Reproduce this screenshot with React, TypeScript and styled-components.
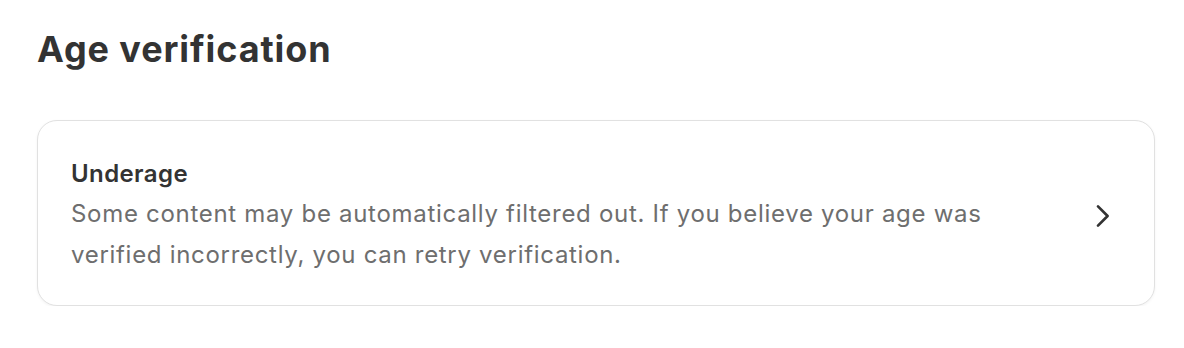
import React from "react";
import styled, { createGlobalStyle } from "styled-components";

const GlobalStyle = createGlobalStyle`
  body {
    margin: 0;
    background: #ffffff;
    font-family: Inter, "Noto Sans", sans-serif;
    color: #333333;
  }
`;

const Page = styled.div`
  padding: 24px 29px 0 37px;
`;

const Title = styled.h1`
  margin: 0 0 46px;
  font-size: 36px;
  line-height: 50px;
  font-weight: 700;
  color: #333333;
  letter-spacing: 0.9px;
`;

const Card = styled.button`
  display: flex;
  align-items: center;
  width: 100%;
  box-sizing: border-box;
  padding: 36px 36px 30px 33px;
  border: 1px solid #e1e1e1;
  border-radius: 20px;
  background: #ffffff;
  box-shadow: 0 1px 3px rgba(0, 0, 0, 0.05);
  text-align: left;
  font-family: inherit;
  cursor: pointer;
`;

const Body = styled.div`
  flex: 1;
`;

const Label = styled.div`
  font-size: 24px;
  line-height: 34px;
  font-weight: 600;
  color: #333333;
  letter-spacing: 0.4px;
`;

const Description = styled.p`
  margin: 2px 0 0;
  max-width: 960px;
  font-size: 24px;
  line-height: 41px;
  font-weight: 400;
  color: #6e6e6e;
  letter-spacing: 0.7px;
`;

const Chevron = () => (
  <svg width="32" height="32" viewBox="0 0 24 24" fill="none">
    <path
      d="M9 4.8l7.2 7.2L9 19.2"
      stroke="#333333"
      strokeWidth="2"
      strokeLinecap="round"
      strokeLinejoin="round"
    />
  </svg>
);

export default function App() {
  return (
    <>
      <GlobalStyle />
      <Page>
        <Title>Age verification</Title>
        <Card>
          <Body>
            <Label>Underage</Label>
            <Description>
              Some content may be automatically filtered out. If you believe
              your age was verified incorrectly, you can retry verification.
            </Description>
          </Body>
          <Chevron />
        </Card>
      </Page>
    </>
  );
}
